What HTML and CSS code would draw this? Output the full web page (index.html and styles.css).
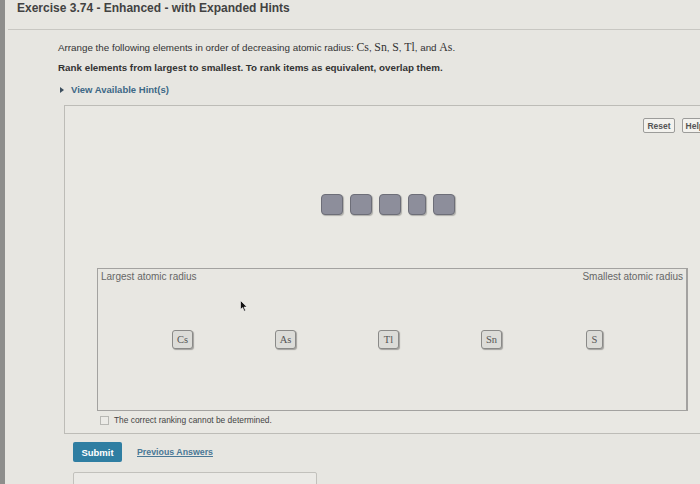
FILE: index.html
```html
<!DOCTYPE html>
<html>
<head>
<meta charset="utf-8">
<link rel="stylesheet" href="styles.css">
</head>
<body>
<div class="page">
  <header class="header">
    <h1 class="title">Exercise 3.74 - Enhanced - with Expanded Hints</h1>
  </header>
  <main class="content">
    <p class="prompt">Arrange the following elements in order of decreasing atomic radius: <span class="el">Cs</span>, <span class="el">Sn</span>, <span class="el">S</span>, <span class="el">Tl</span>, and <span class="el">As</span>.</p>
    <p class="rank">Rank elements from largest to smallest. To rank items as equivalent, overlap them.</p>
    <div class="hint"><span class="tri"></span>View Available Hint(s)</div>

    <section class="panel">
      <div class="toolbar">
        <button class="tbtn">Reset</button>
        <button class="tbtn">Help</button>
      </div>
      <div class="tiles">
        <span class="tile"></span>
        <span class="tile"></span>
        <span class="tile"></span>
        <span class="tile narrow"></span>
        <span class="tile"></span>
      </div>
      <div class="rankbox">
        <div class="labels">
          <span>Largest atomic radius</span>
          <span>Smallest atomic radius</span>
        </div>
        <div class="items">
          <div class="slot"><span class="item">Cs</span></div>
          <div class="slot"><span class="item">As</span></div>
          <div class="slot"><span class="item">Tl</span></div>
          <div class="slot"><span class="item">Sn</span></div>
          <div class="slot"><span class="item small">S</span></div>
        </div>
        <svg class="cursor" width="8" height="12" viewBox="0 0 8 12"><path d="M0.5 0.5 L0.5 9.5 L2.6 7.6 L4.2 11.2 L5.6 10.6 L4 7.1 L7 7.1 Z" fill="#111" stroke="#fff" stroke-width="0.6"/></svg>
      </div>
      <label class="check"><span class="box"></span>The correct ranking cannot be determined.</label>
    </section>

    <div class="actions">
      <button class="submit">Submit</button>
      <a class="prev">Previous Answers</a>
    </div>
    <div class="nextbox"></div>
  </main>
</div>
</body>
</html>
```
FILE: styles.css
```css
html, body {
  margin: 0;
  padding: 0;
  width: 700px;
  height: 484px;
  overflow: hidden;
  background: #e7e6e1;
  font-family: "Liberation Sans", Arial, sans-serif;
}
.page {
  border-left: 5px solid #8e8e8c;
  height: 484px;
  box-sizing: border-box;
}
.header {
  margin-left: 3px;
  height: 29px;
  border-bottom: 1px solid #c8c7c2;
  padding-left: 9px;
}
.title {
  margin: 0;
  font-size: 12px;
  line-height: 16px;
  font-weight: bold;
  color: #424242;
}
.content {
  padding-left: 53px;
}
.prompt {
  margin: 10px 0 0 0;
  font-size: 9.8px;
  line-height: 14px;
  color: #333;
}
.el {
  font-family: "Liberation Serif", "Times New Roman", serif;
  font-size: 11.8px;
}
.rank {
  margin: 6px 0 0 0;
  font-size: 9.8px;
  line-height: 14px;
  font-weight: bold;
  color: #333;
}
.hint {
  margin-top: 8px;
  font-size: 9.5px;
  line-height: 14px;
  font-weight: bold;
  color: #3d6886;
  display: flex;
  align-items: center;
  padding-left: 2px;
}
.tri {
  width: 0;
  height: 0;
  border-left: 4px solid #3d4f5e;
  border-top: 3.5px solid transparent;
  border-bottom: 3.5px solid transparent;
  margin-right: 7px;
}
.panel {
  margin-top: 8px;
  margin-left: 6px;
  width: 660px;
  height: 329px;
  box-sizing: border-box;
  border: 1px solid #bdbcb7;
  border-right: none;
  background: #e9e8e3;
  display: flex;
  flex-direction: column;
}
.toolbar {
  display: flex;
  justify-content: flex-end;
  gap: 7px;
  margin-top: 12px;
  margin-right: 16px;
}
.tbtn {
  height: 15px;
  padding: 0 3px;
  font-family: "Liberation Sans", Arial, sans-serif;
  font-size: 8.5px;
  font-weight: bold;
  color: #555;
  background: #f3f2ee;
  border: 1px solid #9c9c9a;
  border-radius: 2px;
}
.tiles {
  display: flex;
  gap: 7px;
  margin-top: 61px;
  margin-left: 256px;
}
.tile {
  width: 22px;
  height: 21px;
  box-sizing: border-box;
  background: #8d8e9b;
  border: 1px solid #6d6e78;
  border-radius: 4px;
  box-shadow: 1px 1px 1px rgba(0,0,0,0.25);
}
.tile.narrow {
  width: 18px;
}
.rankbox {
  position: relative;
  margin-top: 53px;
  margin-left: 32px;
  width: 591px;
  height: 143px;
  box-sizing: border-box;
  border: 1px solid #a3a2a0;
  border-right-width: 2px;
  background: #e8e7e2;
}
.labels {
  display: flex;
  justify-content: space-between;
  padding: 2px 3px 0 3px;
  font-size: 10px;
  line-height: 12px;
  color: #666;
}
.items {
  display: flex;
  padding-left: 33px;
  margin-top: 47px;
}
.slot {
  width: 103px;
  display: flex;
  justify-content: center;
}
.item {
  width: 21px;
  height: 19px;
  box-sizing: border-box;
  display: flex;
  align-items: center;
  justify-content: center;
  font-family: "Liberation Serif", "Times New Roman", serif;
  font-size: 10.5px;
  color: #555;
  background: #dcdcd8;
  border: 1px solid #8a8a88;
  border-radius: 3px;
  box-shadow: 1px 1px 1px rgba(0,0,0,0.3);
}
.item.small {
  width: 17px;
}
.cursor {
  position: absolute;
  left: 142px;
  top: 31px;
}
.check {
  display: flex;
  align-items: center;
  margin-top: 3px;
  margin-left: 35px;
  font-size: 8.4px;
  line-height: 12px;
  color: #444;
}
.box {
  width: 7px;
  height: 7px;
  border: 1px solid #b8b8b4;
  background: #ecebe7;
  margin-right: 5px;
}
.actions {
  display: flex;
  align-items: center;
  gap: 15px;
  margin-top: 8px;
  margin-left: 15px;
}
.submit {
  width: 49px;
  height: 20px;
  padding: 0;
  border: none;
  border-radius: 2px;
  background: #2f7ea2;
  color: #fff;
  font-family: "Liberation Sans", Arial, sans-serif;
  font-size: 9.5px;
  font-weight: bold;
}
.prev {
  font-size: 8.8px;
  font-weight: bold;
  color: #4a7896;
  text-decoration: underline;
}
.nextbox {
  margin-top: 10px;
  margin-left: 15px;
  width: 242px;
  height: 20px;
  border: 1px solid #c2c1bc;
  border-radius: 2px;
  background: #ebeae6;
}
```
